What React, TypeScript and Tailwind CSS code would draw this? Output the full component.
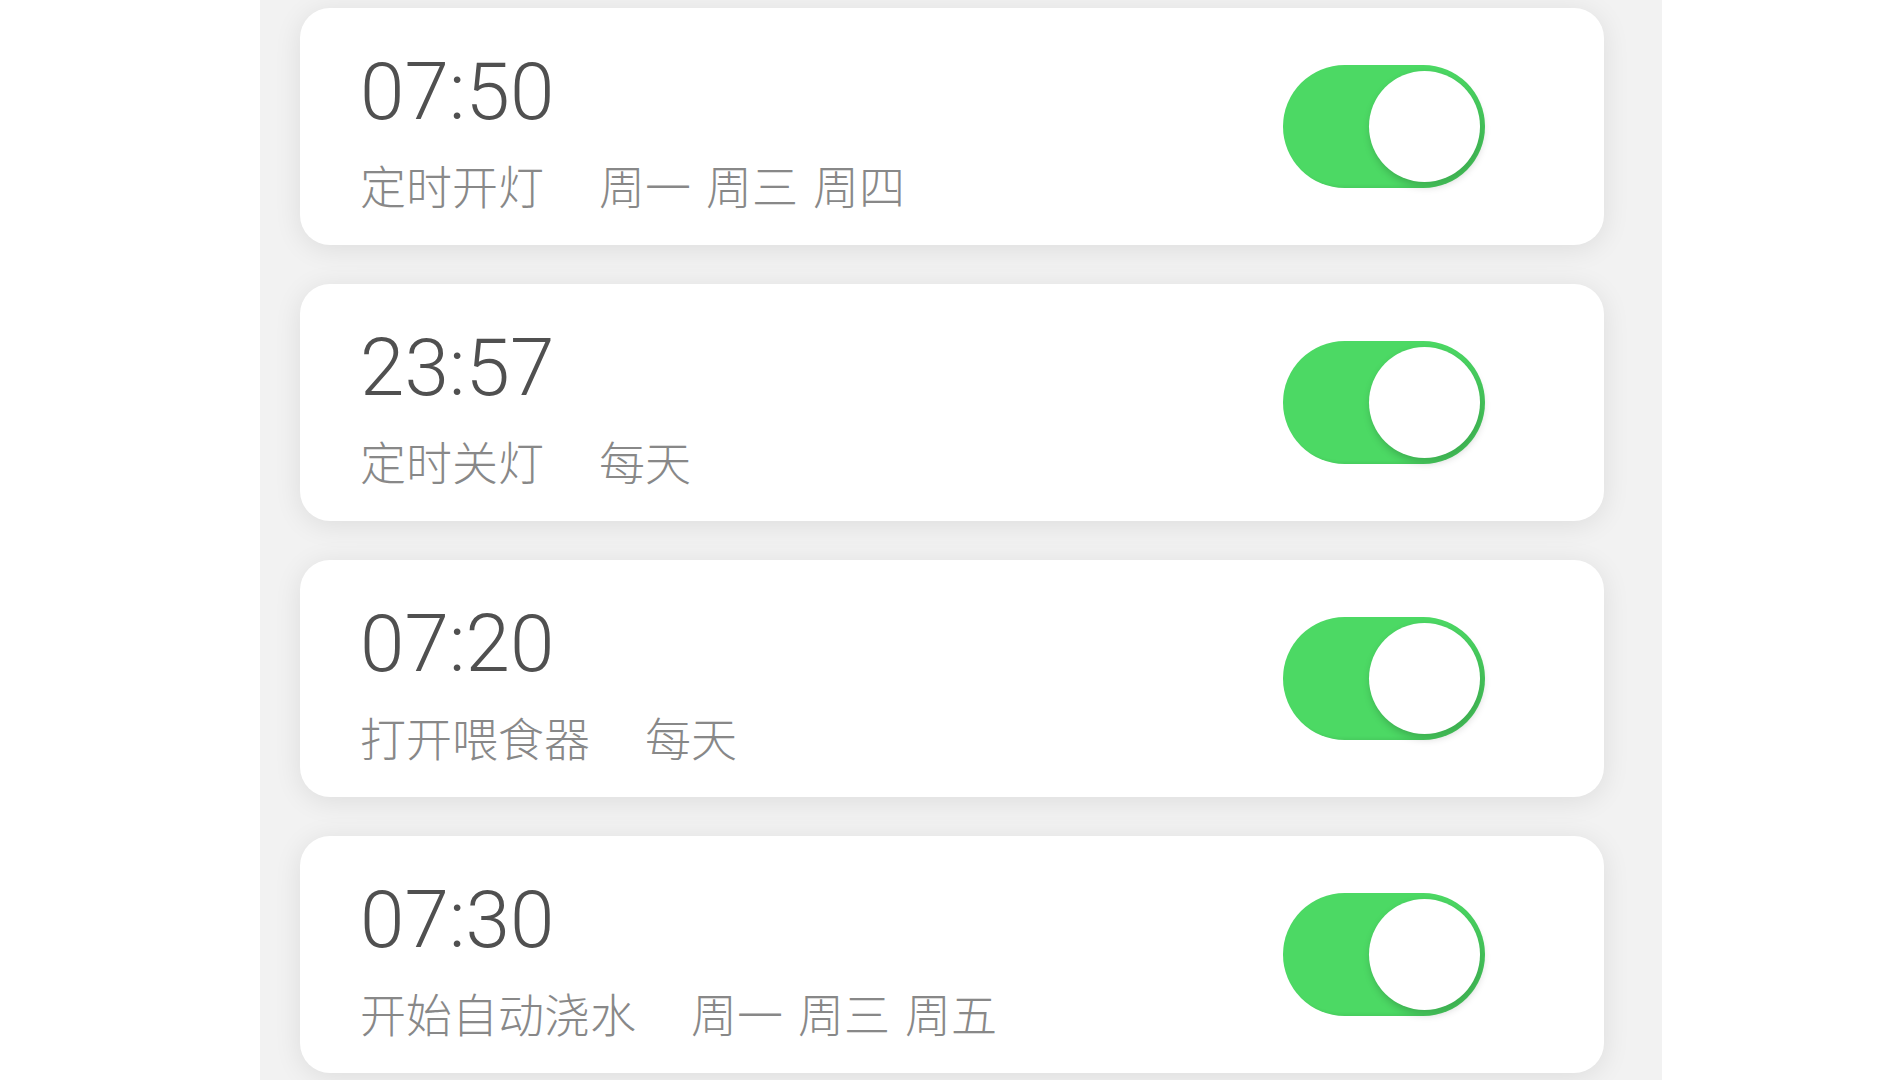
import React from "react";

type Item = { time: string; action: string; days: string[] };

const items: Item[] = [
  { time: "07:50", action: "定时开灯", days: ["周一", "周三", "周四"] },
  { time: "23:57", action: "定时关灯", days: ["每天"] },
  { time: "07:20", action: "打开喂食器", days: ["每天"] },
  { time: "07:30", action: "开始自动浇水", days: ["周一", "周三", "周五"] },
];

function Toggle() {
  return (
    <div className="relative w-[202px] h-[123px] rounded-full bg-[#4cd964] shadow-[inset_-3px_-2px_3px_rgba(0,0,0,0.06)]">
      <div className="absolute right-[5px] top-[6px] w-[111px] h-[111px] rounded-full bg-white shadow-[2px_4px_8px_rgba(0,0,0,0.22)]" />
    </div>
  );
}

function Card({ item }: { item: Item }) {
  return (
    <div className="shrink-0 h-[237px] rounded-[30px] bg-white shadow-[0_4px_28px_rgba(0,0,0,0.09)] flex items-center justify-between pl-[60px] pr-[119px]">
      <div className="flex flex-col gap-[29px] mt-[6px]">
        <div className="font-['Roboto',sans-serif] font-light text-[80px] leading-none text-[#505050]">
          {item.time}
        </div>
        <div className="flex items-center font-['Noto_Sans_CJK_SC',sans-serif] font-light text-[46px] leading-none text-[#888888]">
          <span>{item.action}</span>
          <span className="flex gap-[15px] ml-[55px]">
            {item.days.map((d, i) => (
              <span key={i}>{d}</span>
            ))}
          </span>
        </div>
      </div>
      <Toggle />
    </div>
  );
}

export default function App() {
  return (
    <div className="w-full h-[1080px] bg-white flex overflow-hidden">
      <div className="ml-[260px] w-[1402px] h-full bg-[#f2f2f2] overflow-hidden flex flex-col gap-[39px] pt-[8px] pl-[40px] pr-[58px]">
        {items.map((it, i) => (
          <Card key={i} item={it} />
        ))}
      </div>
    </div>
  );
}
